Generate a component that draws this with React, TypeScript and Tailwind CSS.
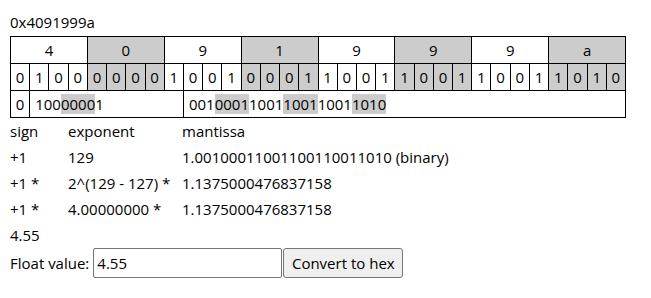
import React from 'react';

const HEX = '4091999a';

function nibbleBits(h: string) {
  return parseInt(h, 16).toString(2).padStart(4, '0');
}

export default function App() {
  const nibbles = HEX.split('').map(nibbleBits);
  const bits = nibbles.join('').split('');

  // split a bit range into runs per nibble, so alternate nibbles get shaded
  const runs = (start: number, end: number) => {
    const out: { text: string; shade: boolean }[] = [];
    for (let i = start; i < end; i++) {
      const n = Math.floor(i / 4);
      const last = out[out.length - 1];
      const shade = n % 2 === 1;
      if (last && last.shade === shade && Math.floor((i - 1) / 4) === n) last.text += bits[i];
      else out.push({ text: bits[i], shade });
    }
    return out;
  };

  return (
    <div
      className="min-h-screen bg-white px-[10px] pt-[12px] text-[15px] text-black"
      style={{ fontFamily: '"Open Sans", "Noto Sans", sans-serif' }}
    >
      <div className="h-[24px] leading-[20px]">0x{HEX}</div>

      {/* bit table */}
      <div className="w-[616px] border-l border-t border-black">
        <div className="grid grid-cols-8">
          {nibbles.map((_, i) => (
            <div
              key={i}
              className={`flex h-[27px] items-center justify-center border-b border-r border-black ${
                i % 2 === 1 ? 'bg-[#cccccc]' : ''
              }`}
            >
              {HEX[i]}
            </div>
          ))}
        </div>
        <div className="grid grid-cols-32">
          {bits.map((b, i) => (
            <div
              key={i}
              className={`flex h-[27px] items-center justify-center border-b border-r border-black ${
                Math.floor(i / 4) % 2 === 1 ? 'bg-[#cccccc]' : ''
              }`}
            >
              {b}
            </div>
          ))}
        </div>
        <div className="grid grid-cols-32">
          <div className="col-span-1 flex h-[27px] items-center justify-center border-b border-r border-black">
            {bits[0]}
          </div>
          <div className="col-span-8 flex h-[27px] items-center border-b border-r border-black pl-[5px]">
            {runs(1, 9).map((r, i) => (
              <span key={i} className={`leading-[20px] ${r.shade ? 'bg-[#cccccc]' : ''}`}>
                {r.text}
              </span>
            ))}
          </div>
          <div className="col-span-23 flex h-[27px] items-center border-b border-r border-black pl-[5px]">
            {runs(9, 32).map((r, i) => (
              <span key={i} className={`leading-[20px] ${r.shade ? 'bg-[#cccccc]' : ''}`}>
                {r.text}
              </span>
            ))}
          </div>
        </div>
      </div>

      {/* breakdown */}
      <div className="grid grid-cols-[58px_114px_auto] leading-[26px]">
        <div>sign</div>
        <div>exponent</div>
        <div>mantissa</div>
        <div>+1</div>
        <div>129</div>
        <div>1.00100011001100110011010 (binary)</div>
        <div>+1 *</div>
        <div>2^(129 - 127) *</div>
        <div>1.1375000476837158</div>
        <div>+1 *</div>
        <div>4.00000000 *</div>
        <div>1.1375000476837158</div>
      </div>
      <div className="leading-[26px]">4.55</div>

      <div className="flex h-[30px] items-stretch">
        <label className="mr-[4px] flex items-center">Float value:</label>
        <input
          defaultValue="4.55"
          className="w-[189px] rounded-[2px] border border-[#767676] bg-white px-[3px] outline-none"
          style={{ font: 'inherit' }}
        />
        <button className="ml-px w-[120px] rounded-[3px] border border-[#767676] bg-[#efefef] text-center">
          Convert to hex
        </button>
      </div>
    </div>
  );
}
